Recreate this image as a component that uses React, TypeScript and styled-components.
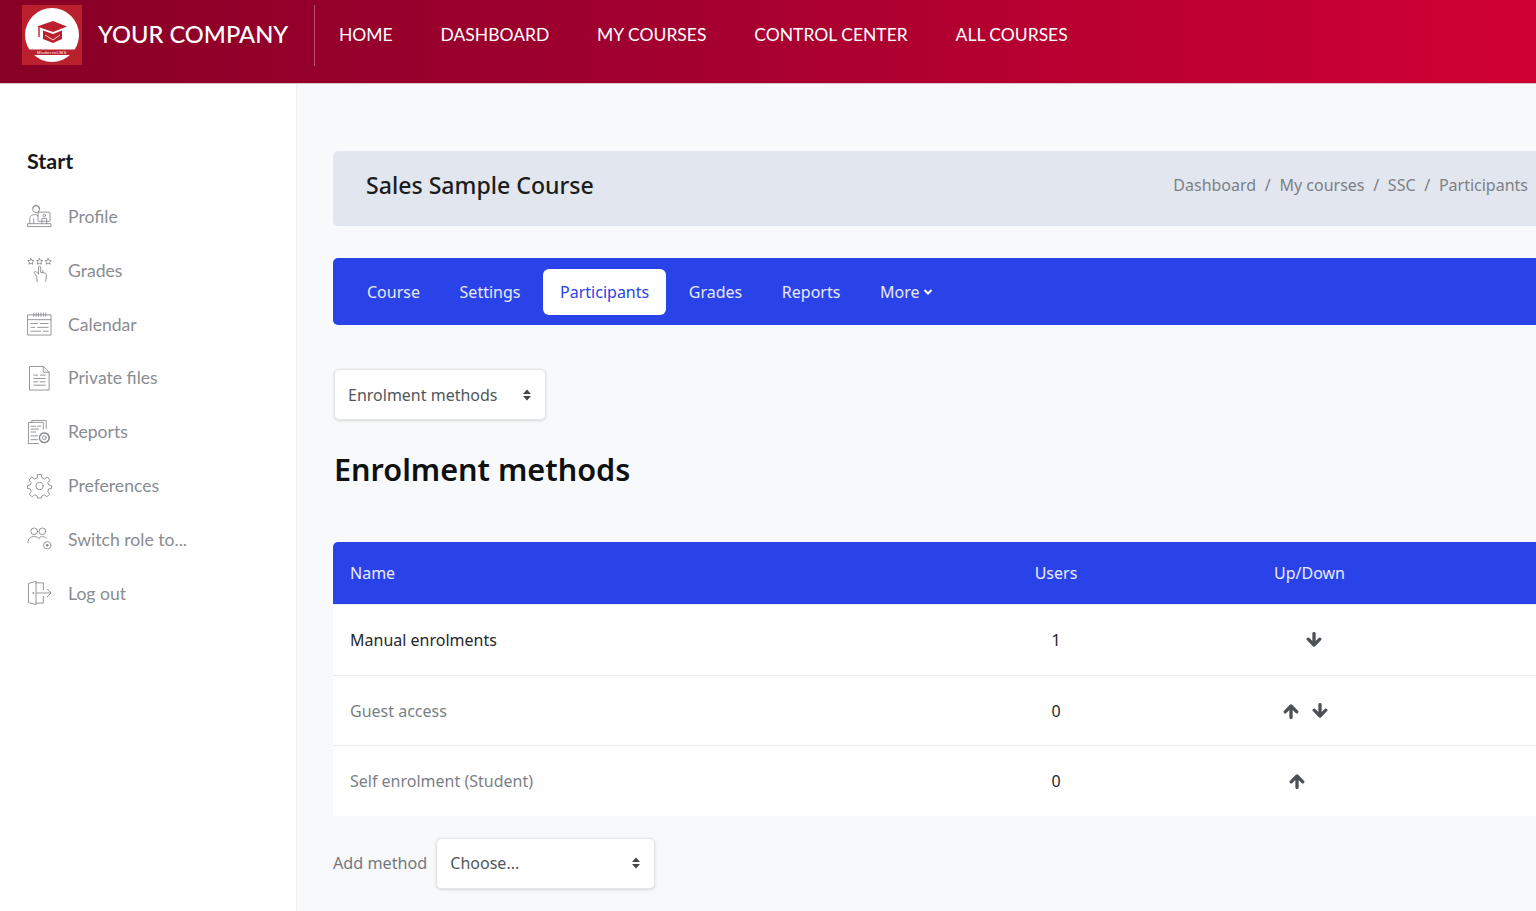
import React from "react";
import styled, { createGlobalStyle } from "styled-components";

const Global = createGlobalStyle`
  html, body { margin: 0; padding: 0; height: 911px; overflow: hidden; background: #f8f9fb; }
  * { box-sizing: border-box; }
  body { font-family: "Noto Sans", "Open Sans", sans-serif; }
`;

const Page = styled.div`
  width: 1536px;
  height: 911px;
  display: flex;
  flex-direction: column;
  overflow: hidden;
`;
const Header = styled.header`
  height: 84px;
  flex: none;
  display: flex;
  align-items: flex-start;
  padding: 5px 0 0 22px;
  background: linear-gradient(90deg, #880026 0%, #a0002f 40%, #d00034 100%);
  border-bottom: 1px solid #d9c3ca;
`;
const LogoBox = styled.div`
  width: 60px;
  height: 60px;
  flex: none;
  background: #bb202e;
  display: flex;
  align-items: center;
  justify-content: center;
`;
const Brand = styled.div`
  width: 233px;
  flex: none;
  height: 61px;
  padding-left: 16px;
  line-height: 59px;
  font-family: Lato, "Noto Sans", sans-serif;
  font-weight: 500;
  font-size: 23.7px;
  color: #fff;
  border-right: 1px solid rgba(255, 255, 255, 0.32);
  white-space: nowrap;
`;
const TopNav = styled.nav`
  display: flex;
  gap: 47.8px;
  padding-left: 24px;
`;
const TopLink = styled.a`
  font-family: Lato, "Noto Sans", sans-serif;
  font-size: 17.5px;
  line-height: 60px;
  color: #fff;
  white-space: nowrap;
`;
const Body = styled.div`
  flex: 1;
  display: flex;
  min-height: 0;
`;
const Sidebar = styled.aside`
  width: 297px;
  flex: none;
  background: #fff;
  border-right: 1px solid #eef0f3;
  padding: 66px 0 0 27px;
`;
const SideTitle = styled.div`
  font-family: Lato, "Noto Sans", sans-serif;
  font-weight: 700;
  font-size: 21.5px;
  line-height: 22px;
  color: #16181b;
  margin-bottom: 29.4px;
`;
const SideList = styled.div`
  display: flex;
  flex-direction: column;
  gap: 23.85px;
`;
const SideItem = styled.a`
  display: flex;
  align-items: center;
  gap: 16px;
  height: 30px;
  font-family: Lato, "Noto Sans", sans-serif;
  font-size: 17.6px;
  color: #8a8d91;
  white-space: nowrap;
`;
const SideIcon = styled.svg.attrs({
  viewBox: "0 0 26 26",
  fill: "none",
  stroke: "#85888c",
  strokeWidth: 0.9,
  strokeLinecap: "round",
  strokeLinejoin: "round",
})`
  width: 25px;
  height: 26px;
  flex: none;
`;
const Main = styled.main`
  flex: 1;
  min-width: 0;
  padding: 67px 0 0 36px;
`;
const Banner = styled.div`
  height: 75px;
  display: flex;
  align-items: center;
  justify-content: space-between;
  padding: 0 8px 8px 33px;
  background: #e2e6ee;
  border-radius: 5px 0 0 5px;
`;
const CourseTitle = styled.h1`
  margin: 0;
  font-size: 23.1px;
  font-weight: 500;
  color: #1b1d20;
`;
const Crumbs = styled.div`
  display: flex;
  gap: 8.7px;
  font-size: 16px;
  color: #7c8086;
`;
const Tabs = styled.nav`
  margin-top: 32px;
  height: 67px;
  display: flex;
  align-items: center;
  gap: 5.6px;
  padding-left: 17px;
  background: #2a43e8;
  border-radius: 5px 0 0 5px;
`;
const Tab = styled.a<{ $active?: boolean }>`
  height: 46px;
  display: flex;
  align-items: center;
  gap: 4px;
  padding: 0 17px;
  border-radius: 6px;
  font-size: 16px;
  color: ${(p) => (p.$active ? "#2a43e8" : "#e6e9ff")};
  background: ${(p) => (p.$active ? "#fff" : "transparent")};
`;
const SelectBox = styled.div<{ $width: number }>`
  width: ${(p) => p.$width}px;
  height: 51px;
  flex: none;
  display: flex;
  align-items: center;
  justify-content: space-between;
  padding: 0 13px;
  background: #fff;
  border: 1px solid #e3e5e8;
  border-radius: 5px;
  box-shadow: 0 1px 3px rgba(0, 0, 0, 0.14);
  font-size: 16px;
  color: #52565b;
`;
const FirstSelect = styled.div`
  margin: 44px 0 0 1px;
`;
const PageTitle = styled.h2`
  margin: 28px 0 0 1px;
  height: 43px;
  line-height: 43px;
  font-size: 30.6px;
  font-weight: 600;
  color: #0e1012;
`;
const Table = styled.div`
  margin-top: 51px;
  background: #fff;
  border-radius: 5px 0 0 0;
  overflow: hidden;
`;
const Row = styled.div<{ $head?: boolean }>`
  display: grid;
  grid-template-columns: 620px 172px 1fr;
  align-items: center;
  padding: ${(p) => (p.$head ? "0" : "1px")} 0 0 17px;
  height: ${(p) => (p.$head ? "62px" : "70.5px")};
  background: ${(p) => (p.$head ? "#2a43e8" : "#fff")};
  color: ${(p) => (p.$head ? "#e9ebff" : "#25282c")};
  font-size: 16px;
  & + & {
    border-top: ${(p) => (p.$head ? "none" : "1px solid #e9ebee")};
  }
`;
const NameCell = styled.div<{ $muted?: boolean }>`
  color: ${(p) => (p.$muted ? "#7b7f85" : "inherit")};
`;
const NumCell = styled.div`
  text-align: center;
`;
const ArrowCell = styled.div<{ $shift: number }>`
  display: flex;
  gap: 13px;
  padding-left: ${(p) => p.$shift}px;
`;
const HeadUpDown = styled.div`
  padding-left: 132px;
`;
const Arrow = styled.svg.attrs({ viewBox: "0 0 16 16" })<{ $down?: boolean }>`
  width: 16px;
  height: 16px;
  fill: none;
  stroke: #4d5054;
  stroke-width: 3.3;
  stroke-linejoin: round;
  stroke-linecap: round;
  transform: ${(p) => (p.$down ? "rotate(180deg)" : "none")};
`;
const AddRow = styled.div`
  margin-top: 22px;
  display: flex;
  align-items: center;
  gap: 9px;
  font-size: 16.2px;
  color: #74787e;
`;
const Carets = styled.svg.attrs({ viewBox: "0 0 10 12", fill: "#43464a" })`
  width: 10px;
  height: 12px;
`;
const Chevron = styled.svg.attrs({
  viewBox: "0 0 10 10",
  fill: "none",
  stroke: "#fff",
  strokeWidth: 2,
})`
  width: 10px;
  height: 10px;
`;

const CaretIcon = () => (
  <Carets>
    <path d="M5 0.5 L9 5 H1 Z M1 7 H9 L5 11.5 Z" />
  </Carets>
);
const UpDown = ({ down }: { down?: boolean }) => (
  <Arrow $down={down}>
    <path d="M8 14.4 V4 M2.2 8.8 L8 3 L13.8 8.8" />
  </Arrow>
);

const icons: Record<string, React.ReactNode> = {
  Profile: (
    <>
      <circle cx="9.5" cy="6" r="3.6" />
      <path d="M6 5 C5.5 0.5 13.5 0.5 13 5 M3 21 V15.5 C3 12 6 11.5 9.5 11.5 L11.5 13 M7 21 V16" />
      <rect x="11.5" y="9" width="12.5" height="9.5" rx="0.5" />
      <circle cx="18" cy="12.5" r="1.2" />
      <path d="M15.5 21 V15.5 H20.5 V21 M1 21 H25 V24 H1 Z" />
    </>
  ),
  Grades: (
    <>
      <path d="M4 1 L5 3 L7.2 3.3 L5.6 4.8 L6 7 L4 6 L2 7 L2.4 4.8 L0.8 3.3 L3 3 Z" />
      <path d="M13 1 L14 3 L16.2 3.3 L14.6 4.8 L15 7 L13 6 L11 7 L11.4 4.8 L9.8 3.3 L12 3 Z" />
      <path d="M22 1 L23 3 L25.2 3.3 L23.6 4.8 L24 7 L22 6 L20 7 L20.4 4.8 L18.8 3.3 L21 3 Z" />
      <path d="M12 17 V10 C12 8.7 14.2 8.7 14.2 10 V15.4 L18.5 16.2 C19.8 16.5 20.3 17.2 20.2 18.5 L19.5 25 M12 17 L9.7 15 C8.2 14 7 15.3 8 16.6 L10 19.5 L10.6 25 M16.5 13.5 V15.8" />
    </>
  ),
  Calendar: (
    <>
      <rect x="1" y="3.5" width="24" height="21" />
      <path d="M1 8.5 H25 M7 1.5 V5 M9.5 1.5 V5 M12 1.5 V5 M14.5 1.5 V5 M17 1.5 V5 M19.5 1.5 V5 M4 12.5 H11 M14 12.5 H22 M4 16.5 H8 M11 16.5 H22 M4 20.5 H14 M17 20.5 H22" />
    </>
  ),
  "Private files": (
    <>
      <path d="M3 1 H17 L23 7 V25.5 H3 Z M17 1 V7 H23" />
      <path d="M7 10 H11 M14 10 H19 M7 13.5 H19 M7 17 H11 M13.5 17 H19 M7 20.5 H19" />
    </>
  ),
  Reports: (
    <>
      <path d="M5 3 V1 H20 V9 M1.5 25 V3 H17 V10 M1.5 25 H12" />
      <path d="M4 7 H9 M11 7 H14.5 M4 10 H12 M4 13 H9 M4 17 H11 M4 21 H11" />
      <circle cx="18" cy="19" r="2" />
      <circle cx="18" cy="19" r="5" strokeDasharray="2 1.2" strokeWidth="1.6" />
    </>
  ),
  Preferences: (
    <>
      <circle cx="13" cy="13" r="3.8" />
      <path d="M11 1 H15 L15.6 4.6 L18.2 5.8 L21 3.6 L23.8 6.8 L21.6 9.6 L22.6 12 L25.5 12.4 V15.6 L22.6 16 L21.6 18.6 L23.6 21.4 L20.8 24.2 L18 22.2 L15.6 23.2 L15 25.5 H11 L10.4 23.2 L8 22.2 L5.2 24.2 L2.4 21.4 L4.4 18.6 L3.4 16 L0.5 15.6 V12.4 L3.4 12 L4.4 9.6 L2.2 6.8 L5 3.6 L7.8 5.8 L10.4 4.6 Z" />
    </>
  ),
  "Switch role to...": (
    <>
      <circle cx="7.5" cy="5" r="3.5" />
      <circle cx="16" cy="5" r="3.5" />
      <path d="M1 17 C1 12 4 10.5 7.5 10.5 C10 10.5 12 11.5 13 13 M13 11.5 C14 10.7 15 10.5 16 10.5 C17 10.5 19 11 20 12" />
      <circle cx="21" cy="19.5" r="3.8" />
      <circle cx="21" cy="19.5" r="1" fill="#85888c" />
    </>
  ),
  "Log out": (
    <>
      <path d="M9 1 L1.5 3 V23 L9 25 Z M9 2.5 H17 V9.5 M9 23.5 H17 V16.5 M10 13 H25 M21 9 L25 13 L21 17" />
      <circle cx="6.5" cy="13" r="0.5" />
    </>
  ),
};

const sideItems = ["Profile", "Grades", "Calendar", "Private files", "Reports", "Preferences", "Switch role to...", "Log out"];

export default function App() {
  return (
    <Page>
      <Global />
      <Header>
        <LogoBox>
          <svg width="54" height="54" viewBox="0 0 54 54">
            <circle cx="27" cy="27" r="27" fill="#fff" />
            <path d="M12 18.5 L28 13 L42 18.5 L28 24 Z" fill="#bb202e" />
            <path d="M18 22.5 L28 26 L37 22.5 V31 L28 35 L18 31 Z" fill="#bb202e" />
            <path d="M20 27 L28 32 L35 27" stroke="#fff" fill="none" strokeWidth="0.8" />
            <path d="M14 19 V29" stroke="#bb202e" strokeWidth="1.4" />
            <rect x="0" y="41.5" width="54" height="5.5" fill="#bb202e" />
            <text x="27" y="46" textAnchor="middle" fontSize="4.4" fill="#fff" fontFamily="Liberation Sans, sans-serif" letterSpacing="0.5">ModerinLMS</text>
          </svg>
        </LogoBox>
        <Brand>YOUR COMPANY</Brand>
        <TopNav>
          {["HOME", "DASHBOARD", "MY COURSES", "CONTROL CENTER", "ALL COURSES"].map((t) => (
            <TopLink key={t}>{t}</TopLink>
          ))}
        </TopNav>
      </Header>
      <Body>
        <Sidebar>
          <SideTitle>Start</SideTitle>
          <SideList>
            {sideItems.map((t) => (
              <SideItem key={t}>
                <SideIcon>{icons[t]}</SideIcon>
                {t}
              </SideItem>
            ))}
          </SideList>
        </Sidebar>
        <Main>
          <Banner>
            <CourseTitle>Sales Sample Course</CourseTitle>
            <Crumbs>
              <span>Dashboard</span><span>/</span><span>My courses</span><span>/</span><span>SSC</span><span>/</span><span>Participants</span>
            </Crumbs>
          </Banner>
          <Tabs>
            <Tab>Course</Tab>
            <Tab>Settings</Tab>
            <Tab $active>Participants</Tab>
            <Tab>Grades</Tab>
            <Tab>Reports</Tab>
            <Tab>
              More
              <Chevron>
                <path d="M1.5 3 L5 6.5 L8.5 3" />
              </Chevron>
            </Tab>
          </Tabs>
          <FirstSelect>
            <SelectBox $width={212}>
              Enrolment methods
              <CaretIcon />
            </SelectBox>
          </FirstSelect>
          <PageTitle>Enrolment methods</PageTitle>
          <Table>
            <Row $head>
              <div>Name</div>
              <NumCell>Users</NumCell>
              <HeadUpDown>Up/Down</HeadUpDown>
            </Row>
            <Row>
              <NameCell>Manual enrolments</NameCell>
              <NumCell>1</NumCell>
              <ArrowCell $shift={164}><UpDown down /></ArrowCell>
            </Row>
            <Row>
              <NameCell $muted>Guest access</NameCell>
              <NumCell>0</NumCell>
              <ArrowCell $shift={141}><UpDown /><UpDown down /></ArrowCell>
            </Row>
            <Row>
              <NameCell $muted>Self enrolment (Student)</NameCell>
              <NumCell>0</NumCell>
              <ArrowCell $shift={147}><UpDown /></ArrowCell>
            </Row>
          </Table>
          <AddRow>
            Add method
            <SelectBox $width={219}>
              Choose...
              <CaretIcon />
            </SelectBox>
          </AddRow>
        </Main>
      </Body>
    </Page>
  );
}
